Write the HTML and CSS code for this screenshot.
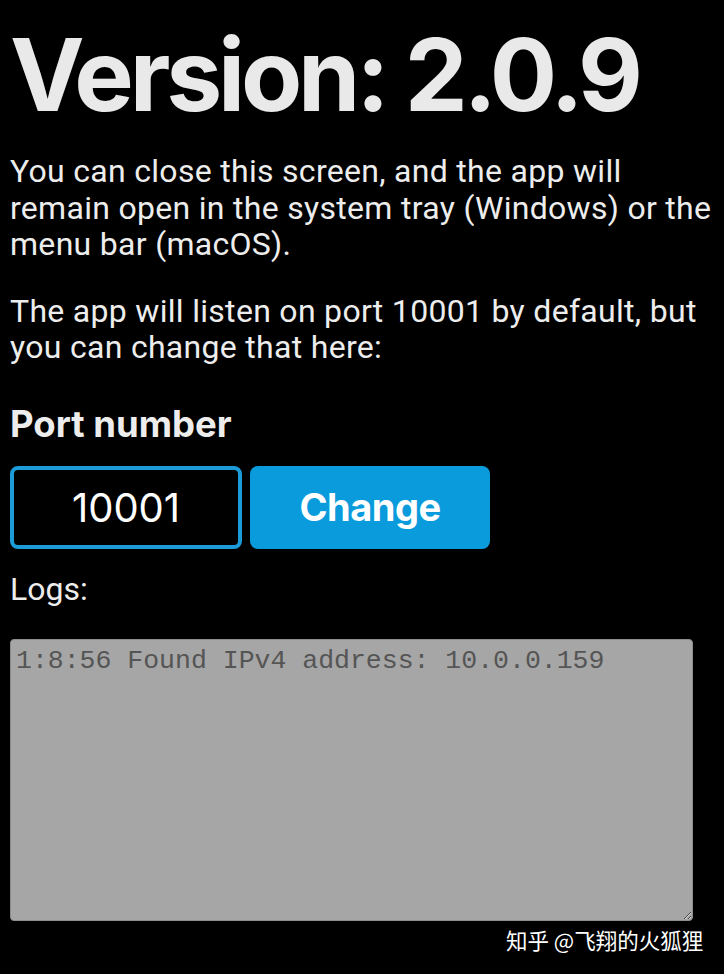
FILE: index.html
```html
<!DOCTYPE html>
<html lang="en">
<head>
<meta charset="utf-8">
<title>Version 2.0.9</title>
<link rel="stylesheet" href="styles.css">
</head>
<body>
<main class="page">
  <h1 class="title">Version: 2.0.9</h1>
  <p class="text">You can close this screen, and the app will remain open in the system tray (Windows) or the menu bar (macOS).</p>
  <p class="text">The app will listen on port 10001 by default, but you can change that here:</p>
  <h2 class="label">Port number</h2>
  <div class="port-row">
    <input class="port-input" type="text" value="10001">
    <button class="change-btn" type="button">Change</button>
  </div>
  <p class="logs-label">Logs:</p>
  <textarea class="logs" readonly>1:8:56 Found IPv4 address: 10.0.0.159</textarea>
</main>
<div class="watermark">知乎 @飞翔的火狐狸</div>
</body>
</html>
```
FILE: styles.css
```css
* { box-sizing: border-box; }
html, body { background: #000; }
body {
  margin: 0;
  padding: 0 10px;
  color: #ededed;
  font-family: Roboto, "Noto Sans", sans-serif;
  overflow: hidden;
  height: 974px;
  position: relative;
}
.page { display: flex; flex-direction: column; align-items: flex-start; }
.title {
  margin: 25px 0 0 0;
  font-family: Inter, sans-serif;
  font-size: 100px;
  line-height: 100px;
  font-weight: 700;
  letter-spacing: -4.2px;
  color: #e9e9e9;
}
.text {
  margin: 0;
  font-size: 32px;
  line-height: 36.5px;
  letter-spacing: 0.3px;
  width: 710px;
}
.title + .text { margin-top: 28px; }
.text + .text { margin-top: 30px; }
.label {
  margin: 38px 0 0 0;
  font-family: Inter, sans-serif;
  font-size: 36.5px;
  font-weight: 700;
  line-height: 40px;
}
.port-row { display: flex; gap: 8px; margin-top: 22px; }
.port-input {
  width: 232px; height: 83px;
  background: #000;
  border: 4px solid #1b9bd8;
  border-radius: 8px;
  color: #fff;
  font-family: Inter, sans-serif;
  font-size: 40px;
  text-align: center;
  outline: none;
  padding: 0;
}
.change-btn {
  width: 240px; height: 83px;
  background: #0a9bdc;
  border: none;
  border-radius: 8px;
  color: #fff;
  font-family: Inter, sans-serif;
  font-size: 38px;
  font-weight: 700;
  letter-spacing: -0.5px;
  padding: 0;
}
.logs-label { margin: 20px 0 0 0; font-size: 32px; line-height: 40px; }
.logs {
  margin-top: 30px;
  width: 683px; height: 282px;
  background: #a6a6a6;
  border: 1px solid #8d8d8d;
  border-radius: 4px;
  color: #555;
  font-family: "Liberation Mono", monospace;
  font-size: 26.5px;
  line-height: 30px;
  padding: 6px 5px 4px;
  resize: both;
  outline: none;
}
.watermark {
  position: absolute;
  left: 506px; top: 927px;
  font-family: "Noto Sans CJK SC", sans-serif;
  font-size: 21.5px;
  line-height: 26px;
  color: #fff;
}
```
